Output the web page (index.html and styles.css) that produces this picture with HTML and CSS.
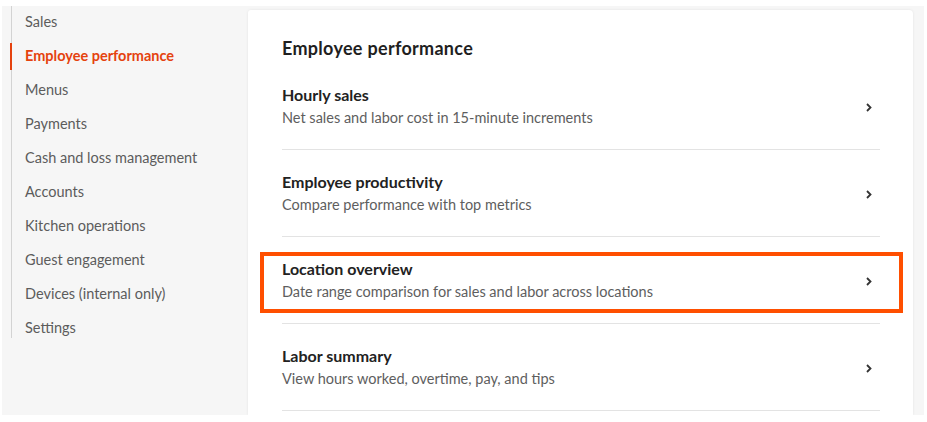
FILE: index.html
```html
<!DOCTYPE html>
<html lang="en">
<head>
<meta charset="utf-8">
<title>Employee performance</title>
<link rel="stylesheet" href="styles.css">
</head>
<body>
<div class="frame">
  <aside class="sidebar">
    <ul class="nav">
      <li class="nav-item">Sales</li>
      <li class="nav-item active">Employee performance</li>
      <li class="nav-item">Menus</li>
      <li class="nav-item">Payments</li>
      <li class="nav-item">Cash and loss management</li>
      <li class="nav-item">Accounts</li>
      <li class="nav-item">Kitchen operations</li>
      <li class="nav-item">Guest engagement</li>
      <li class="nav-item">Devices (internal only)</li>
      <li class="nav-item">Settings</li>
    </ul>
  </aside>
  <main class="card">
    <h1 class="card-title">Employee performance</h1>
    <div class="report">
      <div class="report-text">
        <div class="report-name">Hourly sales</div>
        <div class="report-desc">Net sales and labor cost in 15-minute increments</div>
      </div>
      <svg class="chevron" viewBox="0 0 6 9" width="6" height="9"><path d="M1 1 L4.5 4.5 L1 8" fill="none" stroke="#333" stroke-width="1.8"/></svg>
    </div>
    <div class="report">
      <div class="report-text">
        <div class="report-name">Employee productivity</div>
        <div class="report-desc">Compare performance with top metrics</div>
      </div>
      <svg class="chevron" viewBox="0 0 6 9" width="6" height="9"><path d="M1 1 L4.5 4.5 L1 8" fill="none" stroke="#333" stroke-width="1.8"/></svg>
    </div>
    <div class="report highlighted">
      <div class="report-text">
        <div class="report-name">Location overview</div>
        <div class="report-desc">Date range comparison for sales and labor across locations</div>
      </div>
      <svg class="chevron" viewBox="0 0 6 9" width="6" height="9"><path d="M1 1 L4.5 4.5 L1 8" fill="none" stroke="#333" stroke-width="1.8"/></svg>
      <span class="highlight-box"></span>
    </div>
    <div class="report">
      <div class="report-text">
        <div class="report-name">Labor summary</div>
        <div class="report-desc">View hours worked, overtime, pay, and tips</div>
      </div>
      <svg class="chevron" viewBox="0 0 6 9" width="6" height="9"><path d="M1 1 L4.5 4.5 L1 8" fill="none" stroke="#333" stroke-width="1.8"/></svg>
    </div>
  </main>
</div>
</body>
</html>
```
FILE: styles.css
```css
html, body {
  margin: 0;
  padding: 0;
  background: #ffffff;
}
body {
  font-family: Lato, "Open Sans", "Liberation Sans", sans-serif;
  overflow: hidden;
}
.frame {
  display: flex;
  align-items: stretch;
  margin: 6px 3px 0 2px;
  height: 409px;
  background: #f6f6f6;
  overflow: hidden;
}
.sidebar {
  width: 246px;
  flex: none;
  padding-left: 9px;
  box-sizing: border-box;
}
.nav {
  list-style: none;
  margin: 0;
  padding: 6px 20px 0 13px;
  border-left: 1px solid #d3d3d3;
  display: flex;
  flex-direction: column;
  gap: 14px;
  width: max-content;
}
.nav-item {
  position: relative;
  font-size: 14.5px;
  line-height: 20px;
  color: #5c5c5c;
  white-space: nowrap;
}
.nav-item.active {
  color: #e5420e;
  font-weight: 700;
}
.nav-item.active::before {
  content: "";
  position: absolute;
  left: -15px;
  top: -3px;
  bottom: -4px;
  width: 2px;
  background: #e5420e;
}
.card {
  flex: 1;
  margin: 4px 11px 0 0;
  background: #ffffff;
  border-radius: 3px 4px 0 0;
  box-shadow: 0 0 3px rgba(0, 0, 0, 0.08);
  padding: 26px 33px 0 34px;
}
.card-title {
  margin: 0 0 3px;
  font-size: 18px;
  line-height: 24px;
  font-weight: 700;
  letter-spacing: 0.3px;
  color: #1f1f1f;
}
.report {
  position: relative;
  display: flex;
  align-items: center;
  justify-content: space-between;
  padding: 21px 8px 19px 0;
  border-bottom: 1px solid #e3e3e3;
}
.report-name {
  font-size: 16px;
  line-height: 22px;
  font-weight: 700;
  color: #222222;
}
.report-desc {
  font-size: 14.5px;
  line-height: 24px;
  color: #5e5e5e;
}
.chevron {
  flex: none;
  display: block;
}
.highlight-box {
  position: absolute;
  left: -22px;
  right: -23px;
  top: 15px;
  bottom: 10px;
  border: 4px solid #ff4f00;
  pointer-events: none;
}
```
